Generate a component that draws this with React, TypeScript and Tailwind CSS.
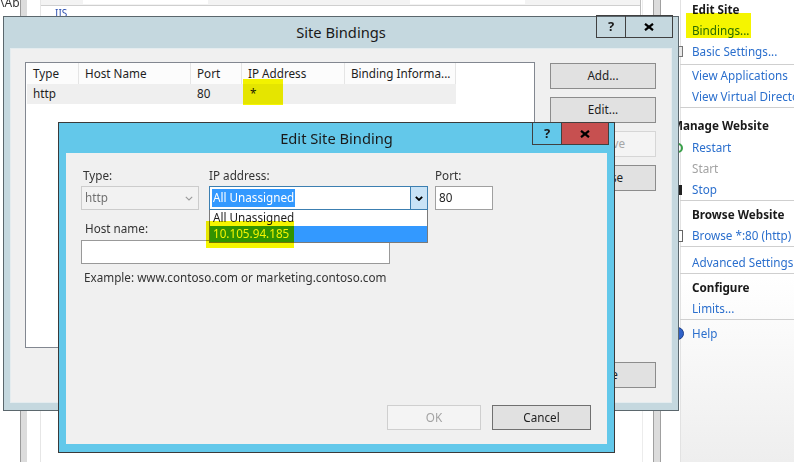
import React from 'react';

function CloseGlyph() {
  return (
    <svg width="10" height="8" viewBox="0 0 10 8">
      <path d="M1 0.8 L9 7.2 M9 0.8 L1 7.2" stroke="#000" strokeWidth="2.2" />
    </svg>
  );
}

function Chevron({ color, width }: { color: string; width: number }) {
  return (
    <svg width="8" height="5" viewBox="0 0 8 5">
      <path d="M0.8 0.8 L4 4 L7.2 0.8" fill="none" stroke={color} strokeWidth={width} />
    </svg>
  );
}

function Background() {
  return (
    <>
      {/* bits of the IIS manager window behind the dialogs */}
      <div className="absolute left-0 top-[-3px] text-[12px] text-[#333]">{'\\Ab'}</div>
      <div className="absolute left-[20px] top-0 h-full w-[7px] bg-[#dcdcdc] border-l border-[#9a9a9a]" />
      <div className="absolute left-[40px] top-0 h-full w-px bg-[#e6e6e6]" />
      <div className="absolute left-[41px] top-0 w-[599px] h-[6px] bg-[#f3f3f3] border-b border-[#cfcfcf]" />
      <div className="absolute left-[83px] top-0 w-[125px] h-[4px] bg-white" />
      <div className="absolute left-[410px] top-0 w-[115px] h-[4px] bg-white" />
      <div className="absolute left-[55px] top-[8px] text-[10px] text-[#2b4fb0]">IIS</div>
      <div className="absolute left-[640px] top-0 h-[16px] w-px bg-[#bdbdbd]" />
      <div className="absolute left-[642px] top-0 h-full w-px bg-[#ececec]" />
      <div className="absolute left-[653px] top-0 h-full w-[8px] bg-[#dcdcdc] border-x border-[#a0a0a0]" />
    </>
  );
}

function ActionLink({ children, icon, muted }: { children: React.ReactNode; icon?: React.ReactNode; muted?: boolean }) {
  return (
    <div className={`h-[21px] flex items-center whitespace-nowrap ${muted ? 'text-[#a3a3a3]' : 'text-[#2b6fcd]'}`}>
      <span className="w-[16px] shrink-0 -ml-[12px] mr-[7px] flex items-center justify-center">{icon}</span>
      {children}
    </div>
  );
}

function ActionHeader({ children }: { children: React.ReactNode }) {
  return <div className="h-[20px] flex items-center pl-[11px] font-bold text-[#1a1a1a] whitespace-nowrap">{children}</div>;
}

function Sep() {
  return <div className="h-px bg-[#cfcfcf] -ml-px" />;
}

function ActionsPane() {
  return (
    <div className="absolute left-[680px] top-0 w-[114px] h-full bg-linear-to-b from-white from-60% to-[#eeeeee] border-l border-[#e2e2e2]">
      <ActionHeader>Edit Site</ActionHeader>
      <div className="relative">
        <ActionLink>Bindings...</ActionLink>
        <div className="absolute left-[5px] top-[-7px] w-[65px] h-[25px] bg-[#f5f500] mix-blend-multiply" />
      </div>
      <ActionLink icon={<span className="block w-[12px] h-[11px] border border-[#777] bg-[#e8e8e8]" />}>Basic Settings...</ActionLink>
      <div className="h-[2px]" />
      <Sep />
      <ActionLink>View Applications</ActionLink>
      <ActionLink>View Virtual Directories</ActionLink>
      <Sep />
      <div className="h-[8px]" />
      <div className="h-[20px] flex items-center -ml-[9px] font-bold text-[#1a1a1a] whitespace-nowrap">Manage Website</div>
      <div className="h-px" />
      <ActionLink icon={<span className="block w-[12px] h-[10px] rounded-full border-2 border-[#3aa04a]" />}>Restart</ActionLink>
      <ActionLink muted>Start</ActionLink>
      <ActionLink icon={<span className="block w-[10px] h-[10px] bg-[#222]" />}>Stop</ActionLink>
      <Sep />
      <div className="h-[4px]" />
      <ActionHeader>Browse Website</ActionHeader>
      <ActionLink icon={<span className="block w-[12px] h-[12px] border border-[#666] bg-white" />}>Browse *:80 (http)</ActionLink>
      <Sep />
      <div className="h-[5px]" />
      <ActionLink>Advanced Settings...</ActionLink>
      <Sep />
      <div className="h-[4px]" />
      <ActionHeader>Configure</ActionHeader>
      <ActionLink>Limits...</ActionLink>
      <Sep />
      <div className="h-[3px]" />
      <ActionLink icon={<span className="block w-[13px] h-[13px] rounded-full bg-[#2f62c9] border border-[#1c3f8a]" />}>Help</ActionLink>
    </div>
  );
}

function SideButton({ children, disabled, className = '' }: { children: React.ReactNode; disabled?: boolean; className?: string }) {
  return (
    <div
      className={`w-[106px] h-[26px] flex items-center justify-center border ${
        disabled ? 'bg-[#f4f4f4] border-[#d6d6d6] text-[#a6a6a6]' : 'bg-[#e1e1e1] border-[#8c8c8c] text-[#1e1e1e]'
      } ${className}`}
    >
      {children}
    </div>
  );
}

function SiteBindings() {
  const cols = [
    { label: 'Type', w: 'w-[52px]' },
    { label: 'Host Name', w: 'w-[112px]' },
    { label: 'Port', w: 'w-[51px]' },
    { label: 'IP Address', w: 'w-[103px]' },
    { label: 'Binding Informa...', w: 'w-[111px]' },
  ];
  return (
    <div className="absolute left-[3px] top-[16px] z-10 w-[676px] h-[395px] border border-[#5b676d] bg-[#c5d8df] flex flex-col">
      <div className="relative h-[31px] shrink-0 flex items-center justify-center text-[14.7px] text-[#1a1a1a]">
        Site Bindings
        <div className="absolute right-[5px] top-[-2px] flex">
          <div className="w-[30px] h-[23px] border border-[#404040] flex items-center justify-center font-bold text-[13px]">?</div>
          <div className="w-[47px] h-[23px] border border-l-0 border-[#404040] flex items-center justify-center">
            <CloseGlyph />
          </div>
        </div>
      </div>
      <div className="flex-1 mx-[6px] mb-[7px] bg-[#f0f0f0] border border-[#e4ecef] flex pl-[14px] pt-[13px]">
        <div className="relative w-[510px] h-[286px] border border-[#828790] bg-white pl-px">
          <div className="flex h-[21px]">
            {cols.map((c) => (
              <div key={c.label} className={`${c.w} h-full flex items-center pl-[6px] border-r border-[#e5e5e5] bg-[#fcfcfc] whitespace-nowrap`}>
                {c.label}
              </div>
            ))}
          </div>
          <div className="flex h-[20px] w-[429px] bg-[#efefef] items-center">
            <div className="w-[52px] pl-[6px]">http</div>
            <div className="w-[112px]" />
            <div className="w-[51px] pl-[6px]">80</div>
            <div className="w-[103px] pl-[8px]">*</div>
          </div>
          <div className="absolute left-[217px] top-[16px] w-[40px] h-[26px] bg-[#f5f500] mix-blend-multiply" />
        </div>
        <div className="ml-[15px] mt-px flex flex-col gap-[8px]">
          <SideButton>Add...</SideButton>
          <SideButton>Edit...</SideButton>
          <SideButton disabled>Remove</SideButton>
          <SideButton>Browse</SideButton>
          <SideButton className="mt-[163px]">Close</SideButton>
        </div>
      </div>
    </div>
  );
}

function EditBinding() {
  return (
    <div className="absolute left-[58px] top-[122px] z-20 w-[557px] h-[331px] border border-[#3a3a3a] bg-[#63c8ea] flex flex-col">
      <div className="relative h-[30px] shrink-0 flex items-center justify-center text-[14.7px] text-[#1a1a1a]">
        Edit Site Binding
        <div className="absolute right-[5px] top-[-1px] flex">
          <div className="w-[30px] h-[23px] border border-[#404040] flex items-center justify-center font-bold text-[13px]">?</div>
          <div className="w-[47px] h-[23px] border border-l-0 border-[#404040] bg-[#c75050] flex items-center justify-center">
            <CloseGlyph />
          </div>
        </div>
      </div>
      <div className="relative flex-1 mx-[7px] mb-[8px] bg-[#f0f0f0] flex flex-col pl-[15px] pt-[15px]">
        <div className="flex">
          <div className="w-[118px]">
            <div className="h-[16px] flex items-center pl-[2px] text-[#333]">Type:</div>
            <div className="mt-[2px] h-[24px] border border-[#cccccc] bg-[#f2f2f2] flex items-center justify-between pl-[3px] pr-[5px] text-[#707070]">
              http
              <Chevron color="#9a9a9a" width={1.1} />
            </div>
          </div>
          <div className="w-[219px] ml-[10px]">
            <div className="h-[16px] flex items-center text-[#333]">IP address:</div>
            <div className="mt-[2px] h-[24px] border border-[#3c7fb1] bg-white flex">
              <div className="flex-1 flex items-center pl-[2px]">
                <span className="h-[18px] flex items-center px-[1px] bg-[#3399ff] text-white">All Unassigned</span>
              </div>
              <div className="w-[17px] border-l border-[#3c7fb1] bg-[#c9e3f6] flex items-center justify-center">
                <Chevron color="#000" width={1.8} />
              </div>
            </div>
          </div>
          <div className="w-[58px] ml-[7px]">
            <div className="h-[16px] flex items-center text-[#333]">Port:</div>
            <div className="mt-[2px] h-[24px] border border-[#a0a0a0] bg-white flex items-center pl-[3px]">80</div>
          </div>
        </div>
        <div className="mt-[11px] h-[16px] flex items-center pl-[4px] text-[#333]">Host name:</div>
        <div className="mt-[3px] w-[309px] h-[24px] border border-[#999] bg-white" />
        <div className="mt-[6px] h-[16px] flex items-center pl-[3px] text-[#333]">Example: www.contoso.com or marketing.contoso.com</div>
        <div className="mt-auto mb-[14px] mr-[16px] flex justify-end gap-[11px]">
          <div className="w-[94px] h-[25px] border border-[#cfcfcf] bg-[#f4f4f4] text-[#a3a3a3] flex items-center justify-center">OK</div>
          <div className="w-[99px] h-[25px] border border-[#707070] bg-[#e1e1e1] flex items-center justify-center">Cancel</div>
        </div>

        {/* open drop-down of the IP address box */}
        <div className="absolute left-[143px] top-[57px] w-[219px] border-x border-b border-[#7a7a7a] bg-white">
          <div className="h-[16px] flex items-center pl-[3px]">All Unassigned</div>
          <div className="h-[16px] flex items-center pl-[3px] bg-[#3399ff] text-white">10.105.94.185</div>
        </div>
        <div className="absolute left-[140px] top-[68px] w-[88px] h-[27px] bg-[#f5f500] mix-blend-multiply" />
      </div>
    </div>
  );
}

export default function App() {
  return (
    <div className="relative w-[794px] h-[462px] overflow-hidden bg-white font-['Segoe_UI','Noto_Sans',sans-serif] text-[11.7px] leading-none text-[#1e1e1e]">
      <Background />
      <ActionsPane />
      <SiteBindings />
      <EditBinding />
    </div>
  );
}
